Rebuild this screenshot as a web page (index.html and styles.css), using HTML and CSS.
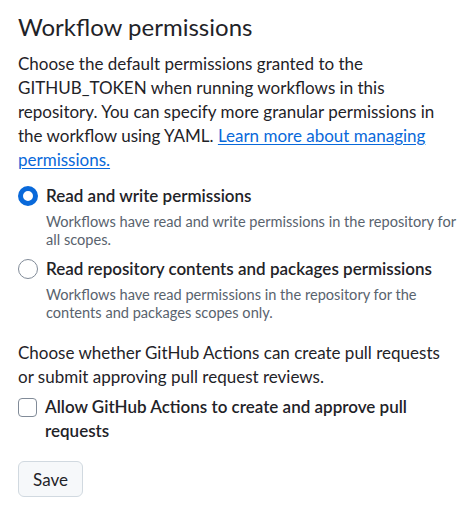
FILE: index.html
```html
<!DOCTYPE html>
<html>
<head>
<meta charset="utf-8">
<link rel="stylesheet" href="styles.css">
</head>
<body>
<main class="page">
  <h2 class="title">Workflow permissions</h2>
  <p class="intro">Choose the default permissions granted to the GITHUB_TOKEN when running workflows in this repository. You can specify more granular permissions in the workflow using YAML. <a href="#" class="link">Learn more about managing permissions.</a></p>
  <div class="options">
    <div class="option">
      <span class="radio checked"></span>
      <div class="option-body">
        <div class="option-label">Read and write permissions</div>
        <div class="option-note">Workflows have read and write permissions in the repository for all scopes.</div>
      </div>
    </div>
    <div class="option">
      <span class="radio"></span>
      <div class="option-body">
        <div class="option-label">Read repository contents and packages permissions</div>
        <div class="option-note">Workflows have read permissions in the repository for the contents and packages scopes only.</div>
      </div>
    </div>
  </div>
  <p class="intro second">Choose whether GitHub Actions can create pull requests or submit approving pull request reviews.</p>
  <div class="option check-option">
    <span class="checkbox"></span>
    <div class="option-body">
      <div class="option-label">Allow GitHub Actions to create and approve pull requests</div>
    </div>
  </div>
  <button class="save">Save</button>
</main>
</body>
</html>
```
FILE: styles.css
```css
* { box-sizing: border-box; }
html, body { margin: 0; padding: 0; background: #fff; }
body {
  font-family: "Lato", "Liberation Sans", sans-serif;
  color: #1f2328;
}
.page {
  padding: 9px 18px 0 18px;
}
.title {
  margin: 0;
  font-size: 24px;
  font-weight: 400;
  line-height: 36px;
}
.intro {
  margin: 7px 0 0 0;
  font-size: 17px;
  line-height: 24px;
}
.link {
  color: #0969da;
  text-decoration: underline;
  text-underline-offset: 2px;
}
.options { margin-top: 12px; display: flex; flex-direction: column; gap: 8px; }
.option { display: flex; gap: 8px; align-items: flex-start; }
.radio {
  flex: none;
  width: 20px; height: 20px;
  border-radius: 50%;
  border: 1px solid #818b98;
  margin-top: 2px;
  background: #fff;
}
.radio.checked { border: 5px solid #0969da; }
.checkbox {
  flex: none;
  width: 19px; height: 19px;
  border-radius: 4px;
  border: 1px solid #818b98;
  margin-top: 3px;
}
.option-body { display: flex; flex-direction: column; }
.option-label {
  font-size: 17px;
  font-weight: 600;
  line-height: 24px;
}
.option-note {
  margin-top: 5px;
  font-size: 14.6px;
  line-height: 18px;
  color: #59636e;
}
.second { margin-top: 19px; }
.check-option { margin-top: 6px; }
.save {
  margin-top: 18px;
  font-family: inherit;
  font-size: 17px;
  color: #1f2328;
  background: #f6f8fa;
  border: 1px solid #d1d9e0;
  border-radius: 6px;
  width: 65px; height: 36px;
  padding: 0;
}
```
